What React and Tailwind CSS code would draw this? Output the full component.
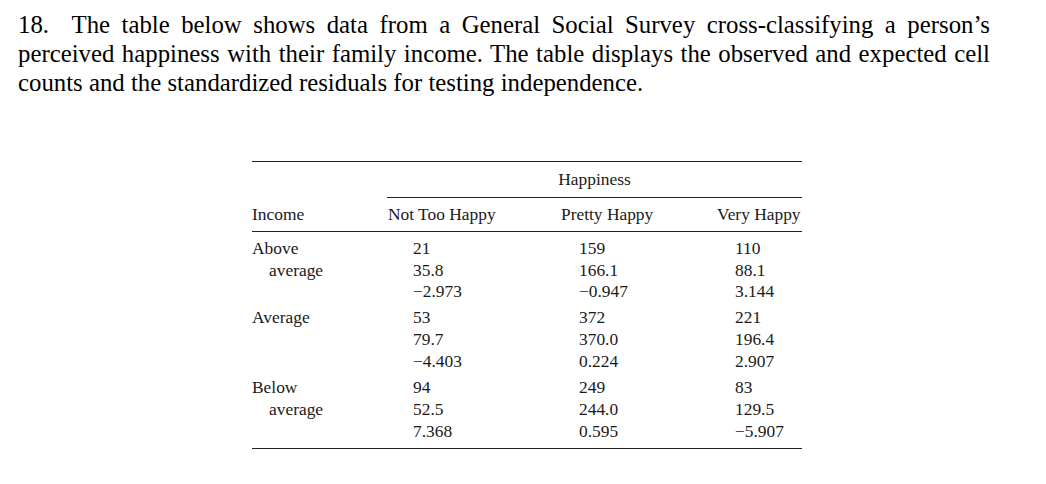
const rows = [
  { label: ['Above', 'average'], cells: [['21', '35.8', '−2.973'], ['159', '166.1', '−0.947'], ['110', '88.1', '3.144']], pad: 'pt-[6px]' },
  { label: ['Average'], cells: [['53', '79.7', '−4.403'], ['372', '370.0', '0.224'], ['221', '196.4', '2.907']], pad: 'pt-[4px]' },
  { label: ['Below', 'average'], cells: [['94', '52.5', '7.368'], ['249', '244.0', '0.595'], ['83', '129.5', '−5.907']], pad: 'pt-[5px]' },
];

const dataPad = ['pl-[26px]', 'pl-[18px]', 'pl-[18px]'];

const App = () => {
  return (
    <div className="w-[1046px] h-[484px] bg-white pt-[10px] px-[18px] font-['Liberation_Serif',serif]">
      <div className="w-[972px] text-[24.8px] leading-[29px] text-black">
        <div className="text-justify whitespace-nowrap [text-align-last:justify]">
          18.&nbsp; The table below shows data from a General Social Survey cross-classifying a person’s
        </div>
        <div className="text-justify whitespace-nowrap [text-align-last:justify]">
          perceived happiness with their family income. The table displays the observed and expected cell
        </div>
        <div className="whitespace-nowrap">
          counts and the standardized residuals for testing independence.
        </div>
      </div>

      <div className="ml-[234px] mt-[64px] w-[550px] border-t border-b border-[#222] pb-[6px] text-[17.4px] leading-[22px] text-[#1a1a1a]">
        <div className="grid grid-cols-[135px_174px_156px_85px]">
          <div className="col-start-2 col-span-3 border-b border-[#222] pt-[6px] pb-[7px] text-center">Happiness</div>
        </div>
        <div className="grid grid-cols-[135px_174px_156px_85px] border-b border-[#222] pt-[5px] pb-[6px]">
          <div>Income</div>
          <div className="pl-px">Not Too Happy</div>
          <div>Pretty Happy</div>
          <div className="whitespace-nowrap">Very Happy</div>
        </div>
        {rows.map((row, i) => (
          <div key={i} className={`grid grid-cols-[135px_174px_156px_85px] leading-[21.7px] ${row.pad}`}>
            <div className="flex flex-col">
              <span>{row.label[0]}</span>
              {row.label[1] && <span className="pl-[17px]">{row.label[1]}</span>}
            </div>
            {row.cells.map((col, j) => (
              <div key={j} className={`flex flex-col ${dataPad[j]}`}>
                {col.map((v, k) => (
                  <span key={k}>{v}</span>
                ))}
              </div>
            ))}
          </div>
        ))}
      </div>
    </div>
  );
};

export default App;
